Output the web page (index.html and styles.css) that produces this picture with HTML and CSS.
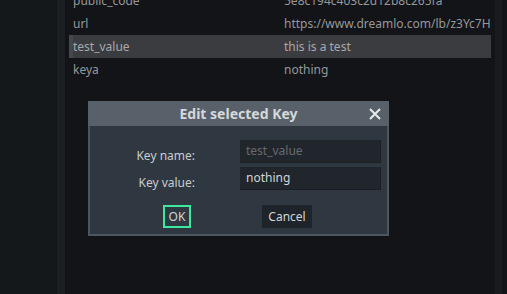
FILE: index.html
```html
<!DOCTYPE html>
<html lang="en">
<head>
    <meta charset="UTF-8">
    <title>Edit selected Key</title>
    <link rel="stylesheet" href="styles.css">
</head>
<body>
    <div class="editor">
        <div class="side"></div>
        <div class="divider"></div>
        <div class="main">
            <div class="tree">
                <div class="row"><span class="key">public_code</span><span class="val">5e8c194c403c2d12b8c265fa</span></div>
                <div class="row"><span class="key">url</span><span class="val">https://www.dreamlo.com/lb/z3Yc7H</span></div>
                <div class="row selected"><span class="key">test_value</span><span class="val">this is a test</span></div>
                <div class="row"><span class="key">keya</span><span class="val">nothing</span></div>
            </div>
        </div>
        <div class="scroll"></div>
        <div class="edge"></div>
    </div>

    <div class="dialog">
        <div class="title">Edit selected Key
            <svg class="close" width="12" height="12" viewBox="0 0 12 12">
                <path d="M1 1 L11 11 M11 1 L1 11" stroke="#e8eaec" stroke-width="2" fill="none"/>
            </svg>
        </div>
        <div class="body">
            <div class="fields">
                <label>Key name:</label>
                <div class="input disabled">test_value</div>
                <label>Key value:</label>
                <div class="input">nothing</div>
            </div>
            <div class="buttons">
                <button class="ok">OK</button>
                <button class="cancel">Cancel</button>
            </div>
        </div>
    </div>
</body>
</html>
```

FILE: styles.css
```css
body {
    margin: 0;
    width: 507px;
    height: 294px;
    overflow: hidden;
    background: #121417;
    font-family: "Noto Sans", sans-serif;
    font-size: 12px;
}
.editor {
    display: flex;
    height: 294px;
}
.side {
    flex: 0 0 56px;
    background: #15181b;
}
.divider {
    flex: 0 0 8px;
    margin-left: 1px;
    background: #1b1f24;
    border-right: 2px solid #111316;
}
.main {
    flex: 1;
    min-width: 0;
    padding-left: 2px;
    padding-right: 4px;
}
.tree {
    margin-top: -11px;
}
.row {
    display: flex;
    height: 23px;
    align-items: center;
    color: #96989b;
    padding-left: 4px;
    white-space: nowrap;
}
.row.selected {
    background: #3b3c3f;
    box-shadow: inset 4px 0 0 #45474a;
    color: #a8a9ab;
}
.key {
    flex: 0 0 211px;
}
.scroll {
    flex: 0 0 7px;
    background: #181b1f;
}
.edge {
    flex: 0 0 5px;
}
.dialog {
    position: absolute;
    left: 88px;
    top: 101px;
    width: 301px;
    height: 135px;
    background: #4d565f;
    display: flex;
    flex-direction: column;
}
.title {
    height: 25px;
    background: #58616a;
    color: #d5d8db;
    font-weight: bold;
    font-size: 14px;
    display: flex;
    align-items: center;
    justify-content: center;
    position: relative;
}
.close {
    position: absolute;
    right: 8px;
    top: 7px;
}
.body {
    flex: 1;
    margin: 0 2px 2px 2px;
    background: #2f3740;
    padding-top: 14px;
}
.fields {
    display: grid;
    grid-template-columns: 105px 141px;
    column-gap: 45px;
    row-gap: 4px;
}
.fields label {
    align-self: end;
    line-height: 14px;
    text-align: right;
    color: #c9ccce;
}
.input {
    height: 23px;
    box-sizing: border-box;
    background: #21262c;
    border-right: 1px solid #1b1f24;
    border-bottom: 1px solid #1b1f24;
    padding-left: 6px;
    line-height: 22px;
    color: #d2d4d6;
}
.input.disabled {
    color: #666b71;
}
.buttons {
    display: flex;
    margin-top: 15px;
    padding-left: 73px;
}
button {
    font-family: "Noto Sans", sans-serif;
    font-size: 12px;
    height: 23px;
    padding: 0;
    color: #d2d4d6;
    border: none;
    background: #1f242a;
}
.ok {
    width: 28px;
    background: #2f3740;
    border: 2px solid #3be89d;
}
.cancel {
    width: 50px;
    margin-left: 71px;
}
```
